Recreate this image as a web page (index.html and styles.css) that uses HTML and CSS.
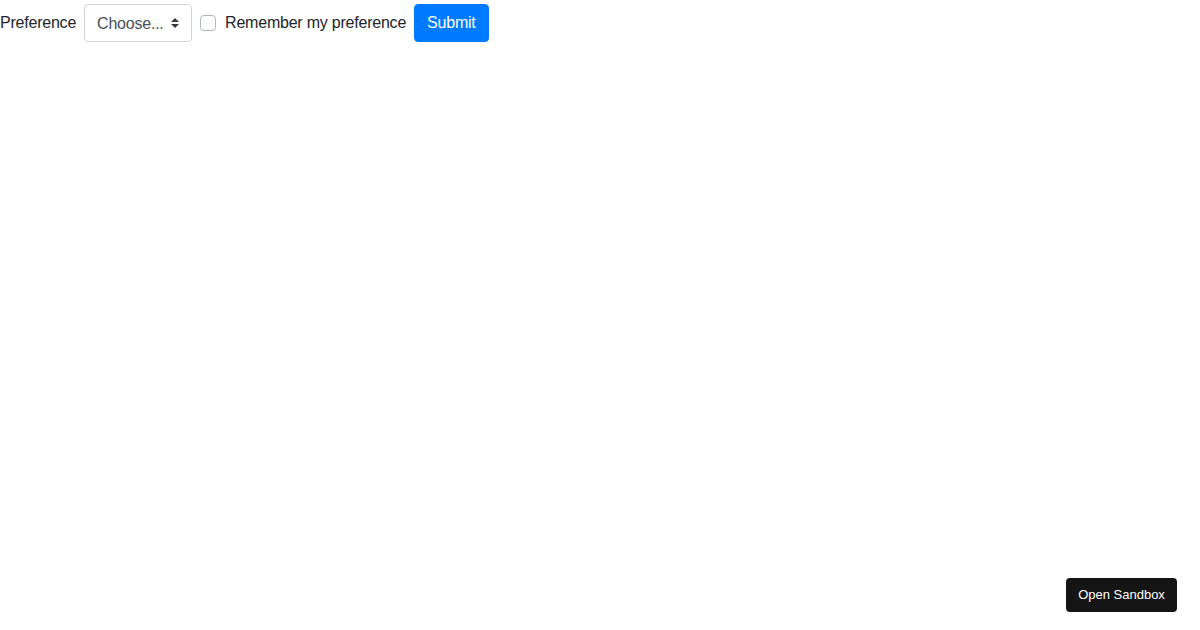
FILE: index.html
```html
<!DOCTYPE html>
<html lang="en">
<head>
    <meta charset="UTF-8">
    <meta name="viewport" content="width=device-width, initial-scale=1.0">
    <title>Preference</title>
    <link rel="stylesheet" href="styles.css">
</head>
<body>

    <form class="form-inline">
        <label class="pref-label" for="pref">Preference</label>
        <div class="select-wrap">
            <select id="pref" class="custom-select">
                <option selected>Choose...</option>
                <option value="1">One</option>
                <option value="2">Two</option>
                <option value="3">Three</option>
            </select>
            <svg class="select-arrow" width="8" height="10" viewBox="0 0 8 10">
                <path d="M4 0 L8 4 H0 Z M4 10 L0 6 H8 Z" fill="#343a40"/>
            </svg>
        </div>
        <div class="check">
            <span class="check-box"></span>
            <label class="check-label">Remember my preference</label>
        </div>
        <button type="submit" class="btn-primary">Submit</button>
    </form>

    <a class="sandbox-btn" href="#">Open Sandbox</a>

</body>
</html>
```

FILE: styles.css
```css
body {
    margin: 0;
    font-family: "Liberation Sans", Arial, sans-serif;
    font-size: 16px;
    line-height: 1.5;
    letter-spacing: -0.22px;
    color: #212529;
    background: #fff;
}

.form-inline {
    display: flex;
    align-items: center;
    padding-top: 4px;
}

.pref-label {
    margin-right: 8px;
}

.select-wrap {
    position: relative;
    margin-right: 8px;
}

.custom-select {
    -webkit-appearance: none;
    appearance: none;
    box-sizing: border-box;
    width: 108px;
    height: 38px;
    padding: 6px 20px 6px 12px;
    font-family: inherit;
    font-size: 16px;
    letter-spacing: -0.22px;
    color: #495057;
    background: #fff;
    border: 1px solid #ced4da;
    border-radius: 4px;
}

.select-arrow {
    position: absolute;
    right: 13px;
    top: 14px;
    pointer-events: none;
}

.check {
    display: flex;
    align-items: center;
    margin-right: 8px;
}

.check-box {
    box-sizing: border-box;
    width: 16px;
    height: 16px;
    border: 1px solid #adb5bd;
    border-radius: 4px;
    background: #fff;
    margin-right: 9px;
}

.btn-primary {
    box-sizing: border-box;
    height: 38px;
    padding: 6px 12px;
    font-family: inherit;
    font-size: 16px;
    letter-spacing: -0.22px;
    color: #fff;
    background: #007bff;
    border: 1px solid #007bff;
    border-radius: 4px;
    cursor: pointer;
}

.sandbox-btn {
    position: fixed;
    right: 23px;
    bottom: 18px;
    box-sizing: border-box;
    width: 111px;
    height: 34px;
    display: flex;
    align-items: center;
    justify-content: center;
    background: #151515;
    color: #fff;
    font-family: "Liberation Sans", Arial, sans-serif;
    font-size: 13px;
    letter-spacing: 0;
    text-decoration: none;
    border-radius: 4px;
}
```
